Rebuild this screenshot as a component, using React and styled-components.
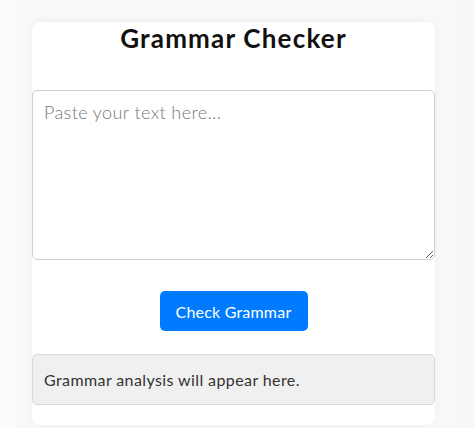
import React from "react";
import styled, { createGlobalStyle } from "styled-components";

const GlobalStyle = createGlobalStyle`
  html, body { margin: 0; padding: 0; }
  body {
    background: #f7f8fa;
    font-family: Lato, "Open Sans", sans-serif;
    color: #222;
  }
  * { box-sizing: border-box; }
`;

const Page = styled.div`
  display: flex;
  min-height: 428px;
`;

const Gutter = styled.div`
  width: 15px;
  background: #fbfbfb;
`;

const Shell = styled.main`
  width: 437px;
  background: #f9f9f9;
  padding: 22px 17px 4px;
`;

const Card = styled.section`
  background: #fff;
  border-radius: 8px;
  box-shadow: 0 0 12px rgba(0, 0, 0, 0.05);
  display: flex;
  flex-direction: column;
  padding-bottom: 20px;
`;

const Title = styled.h1`
  margin: 0;
  font-size: 26px;
  font-weight: 700;
  letter-spacing: 1.2px;
  text-align: center;
  color: #111;
  line-height: 32px;
`;

const TextArea = styled.textarea`
  margin-top: 36px;
  height: 170px;
  width: 100%;
  border: 1px solid #cfcfcf;
  border-radius: 5px;
  padding: 10px 11px;
  font-family: inherit;
  font-size: 18px;
  letter-spacing: 0.4px;
  color: #333;
  resize: vertical;
  &::placeholder { color: #777; font-weight: 300; }
`;

const Actions = styled.div`
  display: flex;
  justify-content: center;
  padding: 31px 0 23px;
`;

const Button = styled.button`
  width: 148px;
  height: 40px;
  background: #007bff;
  color: #fff;
  border: none;
  border-radius: 5px;
  font-family: inherit;
  font-size: 16px;
  letter-spacing: 0.2px;
  cursor: pointer;
`;

const Result = styled.div`
  height: 51px;
  display: flex;
  align-items: center;
  padding: 0 11px;
  background: #f0f0f0;
  border: 1px solid #d9d9d9;
  border-radius: 5px;
  font-size: 16px;
  letter-spacing: 0.4px;
  color: #333;
`;

export default function App() {
  return (
    <>
      <GlobalStyle />
      <Page>
        <Gutter />
        <Shell>
          <Card>
            <Title>Grammar Checker</Title>
            <TextArea placeholder="Paste your text here..." />
            <Actions>
              <Button>Check Grammar</Button>
            </Actions>
            <Result>Grammar analysis will appear here.</Result>
          </Card>
        </Shell>
      </Page>
    </>
  );
}
